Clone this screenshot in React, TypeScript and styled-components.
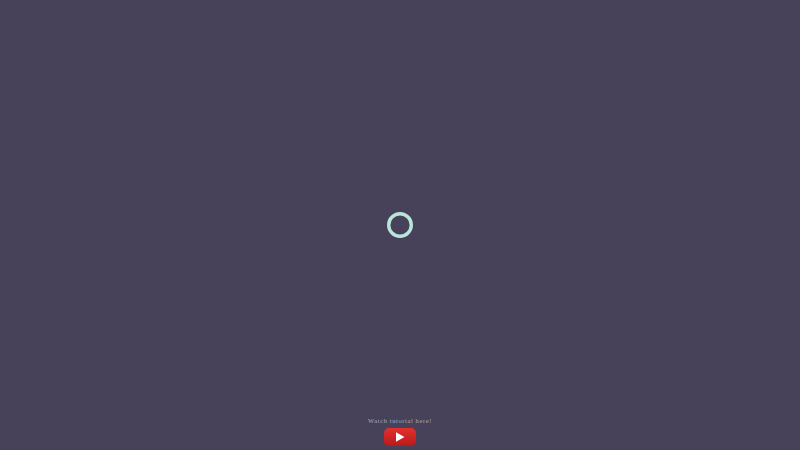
import { createGlobalStyle, styled } from "styled-components";

const GlobalStyle = createGlobalStyle`
  html, body {
    margin: 0;
    height: 100%;
    background: #474159;
  }
  #root {
    height: 100%;
  }
`;

const Page = styled.div`
  position: relative;
  width: 100%;
  height: 100vh;
  display: flex;
  align-items: center;
  justify-content: center;
  overflow: hidden;
  background: #474159;
`;

const Spinner = styled.svg`
  width: 26px;
  height: 26px;
  display: block;
`;

const Tutorial = styled.div`
  position: absolute;
  left: 0;
  right: 0;
  bottom: 4px;
  display: flex;
  flex-direction: column;
  align-items: center;
  gap: 3px;
`;

const Label = styled.span`
  font-family: "Liberation Serif", serif;
  font-size: 6.5px;
  line-height: 8px;
  letter-spacing: 0.6px;
  color: #aeabb7;
`;

const PlayButton = styled.a`
  width: 32px;
  height: 18px;
  display: flex;
  align-items: center;
  justify-content: center;
  border-radius: 5px;
  background: linear-gradient(#e2302c, #b81a1c);
`;

const App = () => {
  return (
    <Page>
      <GlobalStyle />
      <Spinner viewBox="0 0 26 26">
        <circle cx="13" cy="13" r="11.3" fill="none" stroke="#b9e6da" strokeWidth="3.4" />
      </Spinner>
      <Tutorial>
        <Label>Watch tutorial here!</Label>
        <PlayButton>
          <svg width="10" height="10" viewBox="0 0 10 10">
            <path d="M1 0.3 L9.5 5 L1 9.7 Z" fill="#ffffff" />
          </svg>
        </PlayButton>
      </Tutorial>
    </Page>
  );
};

export default App;
